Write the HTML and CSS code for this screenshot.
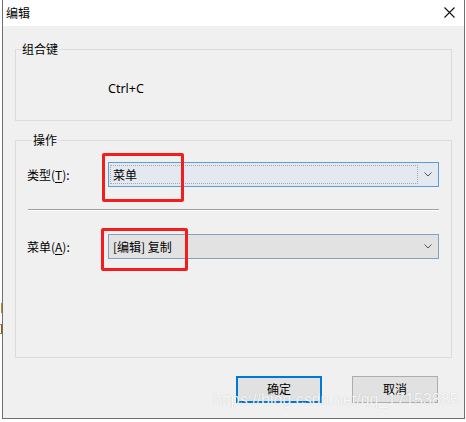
FILE: index.html
```html
<!DOCTYPE html>
<html lang="zh-CN">
<head>
<meta charset="utf-8">
<title>编辑</title>
<link rel="stylesheet" href="styles.css">
</head>
<body>
<div class="window">
  <div class="titlebar">
    <span class="title">编辑</span>
    <svg class="close" width="11" height="11" viewBox="0 0 11 11"><path d="M0.5 0.5 L10.5 10.5 M10.5 0.5 L0.5 10.5" stroke="#111" stroke-width="1.1" fill="none"/></svg>
  </div>
  <div class="client">
    <fieldset class="group group-keys">
      <legend>组合键</legend>
      <div class="keys">Ctrl+C</div>
    </fieldset>
    <fieldset class="group group-action">
      <legend>操作</legend>
      <div class="row row-first">
        <span class="label">类型(<u>T</u>):</span>
        <div class="combo combo-focused">
          <span class="combo-text focus-rect">菜单</span>
          <span class="combo-arrow"><svg width="8" height="5" viewBox="0 0 8 5"><path d="M0.5 0.5 L4 4 L7.5 0.5" stroke="#555" stroke-width="1" fill="none"/></svg></span>
        </div>
      </div>
      <div class="sep"></div>
      <div class="row row-second">
        <span class="label">菜单(<u>A</u>):</span>
        <div class="combo">
          <span class="combo-text">[编辑] 复制</span>
          <span class="combo-arrow"><svg width="8" height="5" viewBox="0 0 8 5"><path d="M0.5 0.5 L4 4 L7.5 0.5" stroke="#555" stroke-width="1" fill="none"/></svg></span>
        </div>
      </div>
    </fieldset>
    <div class="buttons">
      <button class="btn btn-default">确定</button>
      <button class="btn">取消</button>
    </div>
  </div>
</div>
<div class="annot annot-1"></div>
<div class="annot annot-2"></div>
<div class="edge-mark edge-mark-1"></div>
<div class="edge-mark edge-mark-2"></div>
<div class="watermark">https://blog.csdn.net/qq_17153885</div>
</body>
</html>
```

FILE: styles.css
```css
html, body {
  margin: 0;
  padding: 0;
  background: #ffffff;
}
body {
  position: relative;
  width: 466px;
  height: 422px;
  overflow: hidden;
  font-family: "Noto Sans", "Noto Sans CJK SC", sans-serif;
  font-size: 12px;
  color: #000;
}
.window {
  margin-left: 2px;
  width: 461px;
  height: 418px;
  border-left: 1px solid #6f6f6f;
  border-right: 1px solid #6f6f6f;
  border-bottom: 1px solid #6f6f6f;
  display: flex;
  flex-direction: column;
}
.titlebar {
  height: 26px;
  flex: none;
  background: #ffffff;
  display: flex;
  align-items: center;
  justify-content: space-between;
  padding: 0 9px 0 3px;
}
.title {
  font-family: "Noto Sans CJK SC", sans-serif;
  font-size: 12px;
  line-height: 16px;
}
.close {
  display: block;
  margin-top: -1px;
}
.client {
  flex: 1;
  background: #f0f0f0;
  padding: 15px 12px 0 12px;
  display: flex;
  flex-direction: column;
}
.group {
  margin: 0;
  padding: 0;
  min-width: 0;
  border: 1px solid #dcdcdc;
}
.group legend {
  margin-left: 5px;
  padding: 0 1px;
  font-family: "Noto Sans CJK SC", sans-serif;
  font-size: 12px;
  line-height: 16px;
}
.keys {
  padding: 24px 0 23px 92px;
  line-height: 16px;
  font-size: 12.5px;
}
.group-action {
  margin-top: 11px;
  padding: 0 12px 98px 11px;
}
.row {
  display: flex;
  align-items: center;
  height: 25px;
}
.row-first {
  margin-top: 14px;
}
.row-second {
  margin-top: 23px;
}
.label {
  width: 81px;
  flex: none;
  font-family: "Noto Sans CJK SC", sans-serif;
  line-height: 16px;
}
.label u {
  text-underline-offset: 2px;
}
.sep {
  margin-top: 22px;
  margin-left: 1px;
  height: 0;
  border-top: 1px solid #a0a0a0;
  border-bottom: 1px solid #ffffff;
}
.combo {
  flex: 1;
  height: 25px;
  box-sizing: border-box;
  border: 1px solid #86a0bf;
  background: #e2e2e2;
  display: flex;
  align-items: stretch;
  padding: 2px 0 2px 1px;
}
.combo-focused {
  border-color: #5a9bd8;
  background: #e4e8f0;
}
.combo-text {
  flex: 1;
  display: flex;
  align-items: center;
  padding-left: 2px;
  border: 1px solid transparent;
  font-family: "Noto Sans CJK SC", sans-serif;
  line-height: 16px;
}
.focus-rect {
  border: 1px dotted #a8a8a8;
}
.combo-arrow {
  width: 20px;
  flex: none;
  display: flex;
  align-items: center;
  justify-content: center;
}
.combo-arrow svg {
  display: block;
}
.buttons {
  margin-top: 18px;
  padding-right: 14px;
  display: flex;
  justify-content: flex-end;
  gap: 30px;
}
.btn {
  width: 86px;
  height: 27px;
  box-sizing: border-box;
  border: 1px solid #adadad;
  background: #e1e1e1;
  font-family: "Noto Sans CJK SC", sans-serif;
  font-size: 12px;
  line-height: 16px;
  color: #000;
  padding: 0 0 2px 0;
  margin: 0;
}
.btn-default {
  border: 2px solid #0078d7;
}
.annot {
  position: absolute;
  box-sizing: border-box;
  border: 3px solid #f41d1d;
  border-radius: 2px;
}
.annot-1 {
  left: 102px;
  top: 153px;
  width: 82px;
  height: 49px;
}
.annot-2 {
  left: 101px;
  top: 228px;
  width: 87px;
  height: 43px;
}
.edge-mark {
  position: absolute;
  box-sizing: border-box;
}
.edge-mark-1 {
  left: 0;
  top: 303px;
  width: 2px;
  height: 10px;
  border-right: 1px solid #c8820e;
}
.edge-mark-2 {
  left: 0;
  top: 324px;
  width: 2px;
  height: 10px;
  border-top: 1px solid #c8820e;
  border-bottom: 1px solid #c8820e;
  border-right: 1px solid #8a5a10;
}
.watermark {
  position: absolute;
  left: 213px;
  top: 390px;
  font-family: "Liberation Sans", Arial, sans-serif;
  font-size: 16px;
  line-height: 20px;
  color: rgba(255, 255, 255, 0.9);
  text-shadow: 0 0 1px rgba(0, 0, 0, 0.22);
  white-space: nowrap;
}
```
